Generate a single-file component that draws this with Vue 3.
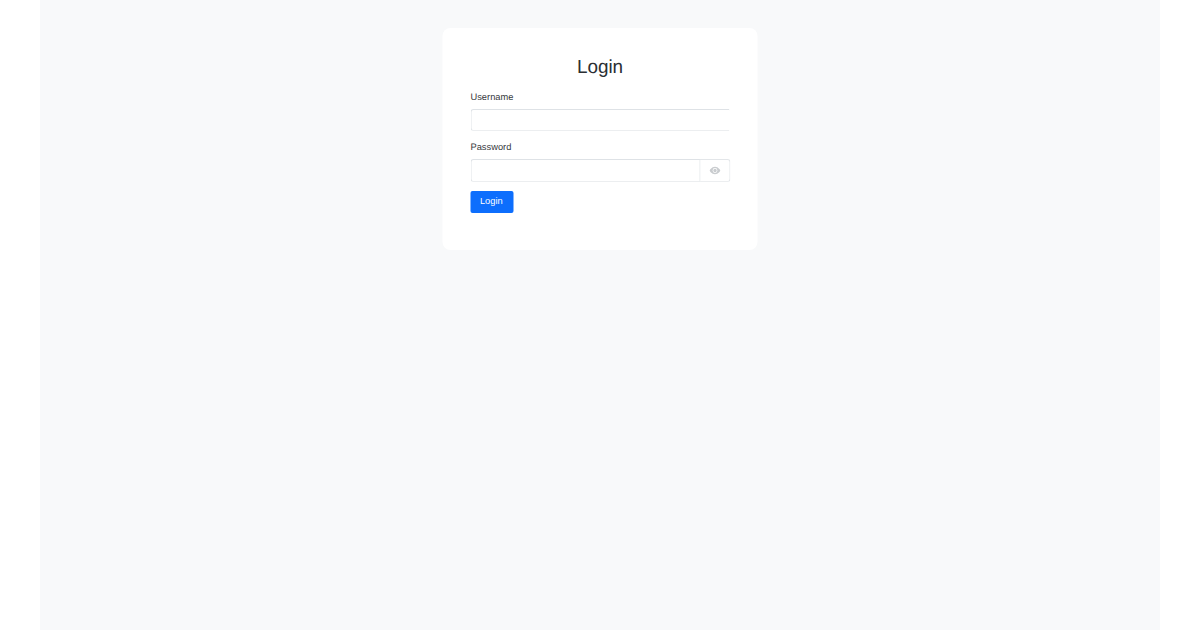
<template>
  <div class="page">
    <div class="login-card">
      <h1 class="title">Login</h1>
      <form @submit.prevent>
        <div class="field">
          <label class="field-label" for="username">Username</label>
          <input id="username" v-model="username" class="field-input field-input--open" type="text" />
        </div>
        <div class="field">
          <label class="field-label" for="password">Password</label>
          <div class="input-group">
            <input id="password" v-model="password" class="field-input field-input--joined" :type="showPassword ? 'text' : 'password'" />
            <button type="button" class="eye-btn" aria-label="Show password" @click="showPassword = !showPassword">
              <svg viewBox="0 0 16 16" width="11" height="11" fill="currentColor">
                <path d="M10.5 8a2.5 2.5 0 1 1-5 0 2.5 2.5 0 0 1 5 0z" />
                <path d="M0 8s3-5.5 8-5.5S16 8 16 8s-3 5.500-8 5.500S0 8 0 8zm8 3.500a3.500 3.500 0 1 0 0-7 3.500 3.500 0 0 0 0 7z" />
              </svg>
            </button>
          </div>
        </div>
        <button type="submit" class="submit-btn">Login</button>
      </form>
    </div>
  </div>
</template>

<script setup>
import { ref } from 'vue'

const username = ref('')
const password = ref('')
const showPassword = ref(false)
</script>

<style>
body { background: #fff; }
</style>

<style scoped>
.page {
  width: 1120px; height: 630px; margin: 0 auto; padding-top: 28px; box-sizing: border-box;
  background: #f8f9fa; font-family: "Liberation Sans", Arial, sans-serif; color: #212529; overflow: hidden;
}
/* half pixel on x: the card sits between pixels, so its edges and text come out soft */
.login-card {
  width: 315px; height: 222px; margin-left: 402px; padding: 28px; box-sizing: border-box;
  background: #fff; border-radius: 8px; transform: translateX(.5px); text-rendering: geometricPrecision;
}
.title { margin: 0 0 12px; padding-top: 2px; color: #2b2f33; font-size: 18.9px; font-weight: 400; line-height: 20px; text-align: center; }
.field { margin-bottom: 9px; }
.field-label { display: block; margin-bottom: 5px; padding-top: 1px; color: #33373b; font-size: 9.3px; line-height: 13px; }
.field-input {
  display: block; width: 100%; height: 22px; padding: 0 8px; box-sizing: border-box;
  border: 1px solid #dee2e6; border-bottom-color: #eceef0; border-radius: 3px;
  background: #fff; outline: none;
  font: 10px "Liberation Sans", Arial, sans-serif; color: #212529;
}
.field-input--open { width: 259px; border-right: 0; border-radius: 3px 0 0 3px; }
.input-group { display: flex; width: 259.5px; }
.field-input--joined { flex: 1; min-width: 0; height: 23px; border-radius: 3px 0 0 3px; }
.eye-btn {
  display: flex; align-items: center; justify-content: center;
  width: 31px; height: 23px; margin-left: -1px; padding: 0; flex-shrink: 0;
  border: 1px solid #e3e6e9; border-bottom-color: #eceef0; border-radius: 0 3px 3px 0; background: #fff; color: #c9cccf;
}
.submit-btn {
  display: block; width: 42.5px; height: 22px; padding: 0 1px 2px 0; border: 0; border-radius: 2px;
  background: #0d6efd; color: #fff; font: 9.3px "Liberation Sans", Arial, sans-serif;
}
</style>
